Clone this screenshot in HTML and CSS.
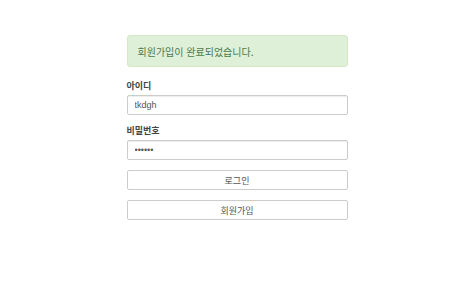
FILE: index.html
```html
<!DOCTYPE html>
<html lang="ko">
<head>
<meta charset="utf-8">
<link rel="stylesheet" href="styles.css">
</head>
<body>
<div class="wrap">
  <div class="alert">회원가입이 완료되었습니다.</div>
  <form class="form">
    <div class="group">
      <label class="label">아이디</label>
      <input class="input" type="text" value="tkdgh">
    </div>
    <div class="group">
      <label class="label">비밀번호</label>
      <input class="input" type="password" value="123456">
    </div>
    <button class="btn" type="button">로그인</button>
    <button class="btn" type="button">회원가입</button>
  </form>
</div>
</body>
</html>
```
FILE: styles.css
```css
html, body {
  margin: 0;
  padding: 0;
  background: #fff;
}
body {
  font-family: "Liberation Sans", "Noto Sans CJK KR", sans-serif;
  color: #333;
  font-size: 9px;
}
.wrap {
  width: 221px;
  margin: 0 auto;
  padding-top: 35px;
}
.alert {
  box-sizing: border-box;
  height: 32px;
  display: flex;
  align-items: center;
  padding: 0 10px;
  background: #dff0d8;
  border: 1px solid #d6e9c6;
  border-radius: 3px;
  color: #4a7a4a;
  font-size: 10px;
  font-family: "Noto Sans CJK KR", sans-serif;
}
.form {
  display: flex;
  flex-direction: column;
  gap: 10px;
  margin-top: 13px;
}
.group {
  display: flex;
  flex-direction: column;
  gap: 3px;
}
.label {
  font-family: "Noto Sans CJK KR", sans-serif;
  font-weight: bold;
  font-size: 9px;
  line-height: 12px;
  color: #444;
}
.input {
  box-sizing: border-box;
  height: 20px;
  width: 100%;
  margin: 0;
  padding: 0 7px;
  border: 1px solid #ccc;
  border-radius: 2px;
  box-shadow: inset 0 1px 1px rgba(0,0,0,.075);
  font-family: "Liberation Sans", sans-serif;
  font-size: 9px;
  color: #555;
  outline: none;
}
.btn {
  box-sizing: border-box;
  height: 20px;
  width: 100%;
  margin: 0;
  padding: 0;
  background: #fff;
  border: 1px solid #ccc;
  border-radius: 2px;
  font-family: "Noto Sans CJK KR", sans-serif;
  font-size: 9px;
  color: #555;
}
```
